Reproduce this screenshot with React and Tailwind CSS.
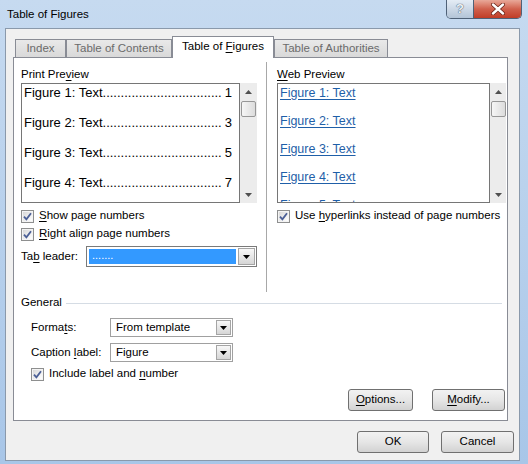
import React from "react";

// underlined access key letter
function Mn({ children }) {
  return <span className="underline underline-offset-[2px]">{children}</span>;
}

function Tri({ up, color = "#000" }) {
  return (
    <svg width="7" height="4" viewBox="0 0 7 4" className="block">
      <path d={up ? "M0 4 L3.5 0 L7 4Z" : "M0 0 L7 0 L3.5 4Z"} fill={color} />
    </svg>
  );
}

function CheckBox() {
  return (
    <svg width="13" height="13" viewBox="0 0 13 13" className="shrink-0 block">
      <defs>
        <linearGradient id="cbfill" x1="0" y1="0" x2="1" y2="1">
          <stop offset="0" stopColor="#d8d8d8" />
          <stop offset="1" stopColor="#ffffff" />
        </linearGradient>
      </defs>
      <rect x="0.5" y="0.5" width="12" height="12" fill="#f4f4f4" stroke="#8e8f8f" />
      <rect x="2" y="2" width="9" height="9" fill="url(#cbfill)" />
      <path d="M3 6.6 L5.4 9.3 L10 3.2" fill="none" stroke="#4b5f96" strokeWidth="1.8" />
    </svg>
  );
}

function Check({ children, className = "" }) {
  return (
    <div className={"flex items-center h-[18px] " + className}>
      <CheckBox />
      <span className="ml-[5px]">{children}</span>
    </div>
  );
}

function DropBtn({ className = "" }) {
  return (
    <div
      className={
        "flex items-center justify-center border border-[#a5a5a5] bg-linear-to-b from-[#f8f8f8] to-[#d6d6d6] " +
        className
      }
    >
      <Tri />
    </div>
  );
}

function ScrollBar({ className = "" }) {
  return (
    <div className={"h-[120px] bg-[#ececec] flex flex-col items-center " + className}>
      <div className="h-[17px] flex items-center justify-center">
        <Tri up color="#505050" />
      </div>
      <div className="mt-[1px] w-[15px] h-[16px] rounded-[2px] border border-[#979797] bg-linear-to-r from-[#f6f6f6] to-[#dcdcdc]" />
      <div className="flex-1" />
      <div className="h-[17px] flex items-center justify-center">
        <Tri color="#505050" />
      </div>
    </div>
  );
}

function Button({ children, className = "" }) {
  return (
    <div
      className={
        "h-[22px] flex items-center justify-center rounded-[3px] border border-[#707070] bg-linear-to-b from-[#f2f2f2] via-[#e6e6e6] to-[#d2d2d2] " +
        className
      }
    >
      <span>{children}</span>
    </div>
  );
}

function Select({ value, className = "" }) {
  return (
    <div className={"h-[19px] flex border border-[#a0a0a0] bg-white " + className}>
      <div className="flex-1 pl-[5px] leading-[17px]">{value}</div>
      <DropBtn className="w-[15px] my-[1px] mr-[1px]" />
    </div>
  );
}

const leader = ".".repeat(33);

const printRows = [
  ["Figure 1: Text", "1"],
  ["Figure 2: Text", "3"],
  ["Figure 3: Text", "5"],
  ["Figure 4: Text", "7"],
];

const webRows = ["Figure 1: Text", "Figure 2: Text", "Figure 3: Text", "Figure 4: Text", "Figure 5: Text"];

const tabs = [
  { label: "Index", w: "w-[51px]" },
  { label: "Table of Contents", w: "w-[106px]" },
  { label: "figures", w: "w-[102px]" },
  { label: "Table of Authorities", w: "w-[114px]" },
];

export default function App() {
  return (
    <div className="w-[528px] h-[464px] bg-linear-to-b from-[#c6daf0] to-[#a8c6e8] text-[11.5px] text-black [font-family:'Liberation_Sans',Arial,sans-serif] overflow-hidden">
      {/* caption bar */}
      <div className="h-[28px] flex justify-between">
        <div className="pl-[7px] pt-[7px] leading-[14px]">Table of Figures</div>
        <div className="mr-[6px] flex h-[19px] border border-t-0 border-[#4f6177] rounded-b-[5px] overflow-hidden">
          <div className="w-[26px] flex items-center justify-center bg-linear-to-b from-[#e4ecf5] via-[#ccd8e6] to-[#b3c4d7] text-[13px] font-bold text-[#eef2f6] [text-shadow:0_0_1px_#44556a,0_0_1px_#44556a]">
            ?
          </div>
          <div className="w-[48px] border-l border-[#4f6177] flex items-center justify-center bg-linear-to-b from-[#e8a899] via-[#d0604c] to-[#c13c26]">
            <svg width="14" height="12" viewBox="0 0 14 12">
              <path d="M2 1.5 L12 10.5 M12 1.5 L2 10.5" stroke="#6b2418" strokeWidth="4" strokeLinecap="round" />
              <path d="M2 1.5 L12 10.5 M12 1.5 L2 10.5" stroke="#ffffff" strokeWidth="2.4" strokeLinecap="round" />
            </svg>
          </div>
        </div>
      </div>

      {/* client area */}
      <div className="ml-[5px] w-[515px] h-[433px] border border-[#8a99ab] bg-[#f0f0f0] pt-[7px] pl-[7px]">
        {/* tab strip */}
        <div className="flex items-end h-[21px] pl-[2px]">
          {tabs.map((t) =>
            t.label === "figures" ? (
              <div
                key={t.label}
                className={`${t.w} h-[22px] -mb-px relative z-10 bg-white border border-b-0 border-[#898c95] flex items-center justify-center pb-[2px]`}
              >
                <span>
                  Table of <Mn>F</Mn>igures
                </span>
              </div>
            ) : (
              <div
                key={t.label}
                className={`${t.w} h-[18px] bg-linear-to-b from-[#e9e9e9] to-[#d9d9d9] border border-b-0 border-[#898c95] flex items-center justify-center text-[#6b6b6b]`}
              >
                {t.label}
              </div>
            )
          )}
        </div>

        {/* tab page */}
        <div className="w-[495px] h-[364px] border border-[#898c95] bg-white">
          <div className="mt-[4px] h-[230px] pl-[7px] flex">
            {/* print preview column */}
            <div className="w-[236px] pt-[4px] flex flex-col">
              <div className="h-[16px] leading-[16px]">
                Print Pre<Mn>v</Mn>iew
              </div>
              <div className="mt-[1px] flex">
                <div className="w-[220px] h-[120px] border border-[#767676] pl-[2px] pr-[7px] overflow-hidden text-[13px] leading-[18px] flex flex-col gap-[12px]">
                  {printRows.map(([label, page]) => (
                    <div key={label} className="flex justify-between whitespace-nowrap">
                      <span>
                        {label}
                        {leader}
                      </span>
                      <span>{page}</span>
                    </div>
                  ))}
                </div>
                <ScrollBar className="w-[17px]" />
              </div>
              <Check className="mt-[4px]">
                <Mn>S</Mn>how page numbers
              </Check>
              <Check>
                <Mn>R</Mn>ight align page numbers
              </Check>
              <div className="mt-[3px] flex items-center h-[21px]">
                <div className="w-[65px]">
                  Ta<Mn>b</Mn> leader:
                </div>
                <div className="w-[171px] h-[21px] flex border border-[#7a7a7a] bg-white">
                  <div className="flex-1 p-[2px]">
                    <div className="h-full bg-[#3399ff] text-white pl-[3px] leading-[12px] text-[11px]">.......</div>
                  </div>
                  <DropBtn className="w-[17px] my-[1px] mr-[1px]" />
                </div>
              </div>
            </div>

            <div className="ml-[9px] w-px bg-[#a8a8a8]" />

            {/* web preview column */}
            <div className="ml-[10px] w-[229px] pt-[4px] flex flex-col">
              <div className="h-[16px] leading-[16px]">
                <Mn>W</Mn>eb Preview
              </div>
              <div className="mt-[1px] flex">
                <div className="w-[213px] h-[120px] border border-[#767676] pl-[2px] overflow-hidden text-[12.5px] leading-[18px] flex flex-col gap-[10px] text-[#1f5fa8]">
                  {webRows.map((r) => (
                    <div key={r} className="whitespace-nowrap">
                      <span className="underline underline-offset-[2px]">{r}</span>
                    </div>
                  ))}
                </div>
                <ScrollBar className="w-[16px]" />
              </div>
              <Check className="mt-[4px]">
                Use <Mn>h</Mn>yperlinks instead of page numbers
              </Check>
            </div>
          </div>

          {/* general group */}
          <div className="mt-[3px] h-[16px] w-[488px] pl-[7px] flex items-center">
            <span>General</span>
            <div className="ml-[4px] flex-1 h-px bg-[#d5dce4]" />
          </div>
          <div className="mt-[7px] pl-[17px] flex items-center">
            <div className="w-[79px]">
              Forma<Mn>t</Mn>s:
            </div>
            <Select value="From template" className="w-[123px]" />
          </div>
          <div className="mt-[6px] pl-[17px] flex items-center">
            <div className="w-[79px]">
              Caption <Mn>l</Mn>abel:
            </div>
            <Select value="Figure" className="w-[123px]" />
          </div>
          <Check className="mt-[3px] ml-[17px]">
            Include label and <Mn>n</Mn>umber
          </Check>
          <div className="mt-[6px] pr-[2px] flex justify-end gap-[19px]">
            <Button className="w-[65px]">
              <Mn>O</Mn>ptions...
            </Button>
            <Button className="w-[73px]">
              <Mn>M</Mn>odify...
            </Button>
          </div>
        </div>

        <div className="mt-[10px] pr-[5px] flex justify-end gap-[12px]">
          <Button className="w-[72px]">OK</Button>
          <Button className="w-[73px]">Cancel</Button>
        </div>
      </div>
    </div>
  );
}
